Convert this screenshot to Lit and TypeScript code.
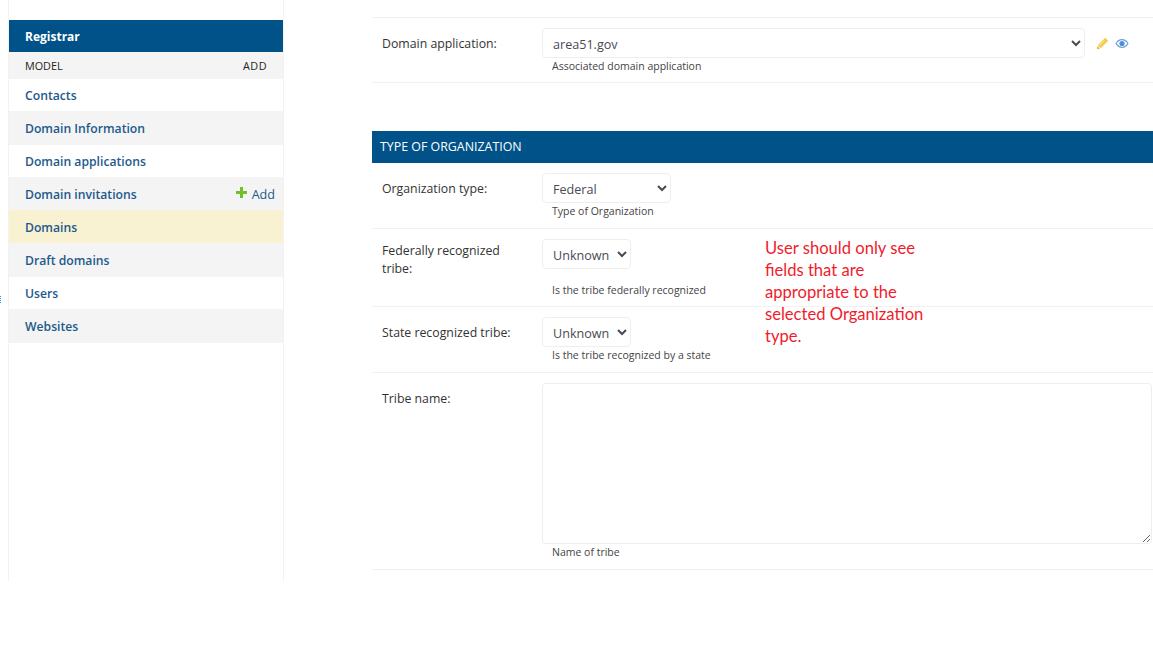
import { LitElement, html, css } from "lit";
import { customElement } from "lit/decorators.js";

const models: { name: string; add?: boolean; cls: string }[] = [
  { name: "Contacts", cls: "r1 white" },
  { name: "Domain Information", cls: "r2 grey" },
  { name: "Domain applications", cls: "r1 white" },
  { name: "Domain invitations", add: true, cls: "r3 grey" },
  { name: "Domains", cls: "r3 yellow" },
  { name: "Draft domains", cls: "r2 grey" },
  { name: "Users", cls: "r1 white" },
  { name: "Websites", cls: "r2 grey" },
];

@customElement("app-root")
export class AppRoot extends LitElement {
  static styles = css`
    :host {
      display: block;
      height: 648px;
      background: #fff;
      font-family: "Open Sans", "Noto Sans", sans-serif;
      color: #333;
      font-size: 13px;
    }
    .page {
      position: relative;
      display: flex;
      height: 581px;
      overflow: hidden;
    }
    .toggle {
      position: absolute;
      left: 0;
      top: 296px;
      width: 1px;
      height: 7px;
      border-left: 1px dotted #3a9bd9;
    }
    .sidebar {
      box-sizing: border-box;
      width: 276px;
      margin-left: 8px;
      padding-top: 20px;
      border-left: 1px solid #f2f2f2;
      border-right: 1px solid #f2f2f2;
      flex: none;
    }
    .app-head {
      height: 32px;
      display: flex;
      align-items: center;
      padding-left: 16px;
      background: #005288;
      color: #fff;
      font-weight: 700;
      font-size: 12px;
    }
    .cols {
      height: 27px;
      display: flex;
      align-items: center;
      justify-content: space-between;
      padding: 0 16px;
      background: #f4f4f4;
      font-size: 10.8px;
      color: #222;
      font-weight: 500;
    }
    .cols .spaced { letter-spacing: 0.5px; }
    .row {
      box-sizing: border-box;
      display: flex;
      align-items: center;
      justify-content: space-between;
      padding: 0 8px 0 16px;
      color: #1d5a8c;
      font-weight: 600;
      font-size: 12.2px;
    }
    .r1 { height: 32px; }
    .r2 { height: 34px; }
    .r3 { height: 33px; padding-top: 1px; }
    .white { background: #fff; }
    .grey { background: #f4f4f4; }
    .yellow { background: #f9f2d2; }
    .add {
      display: flex;
      align-items: center;
      gap: 5px;
      font-weight: 400;
      font-size: 12.6px;
    }
    .add svg { width: 11px; height: 11px; margin-top: -3px; }
    .main {
      flex: 1;
      margin-left: 88px;
      padding-top: 17px;
      min-width: 0;
    }
    .form-row {
      box-sizing: border-box;
      display: flex;
      padding: 10px 1px 0 10px;
      border-bottom: 1px solid #f1f1f1;
    }
    .first { border-top: 1px solid #f1f1f1; height: 66px; }
    .org { height: 66px; }
    .fed { height: 78px; }
    .state { height: 66px; }
    .tribe { height: 197px; }
    label {
      width: 160px;
      flex: none;
      box-sizing: border-box;
      padding: 7px 30px 0 0;
      line-height: 18px;
      font-size: 12.3px;
      color: #333;
    }
    .fed label { padding-top: 3px; }
    .field { flex: 1; min-width: 0; }
    .control { display: flex; align-items: center; }
    select {
      height: 30px;
      box-sizing: border-box;
      border: 1px solid #eee;
      border-radius: 4px;
      background: #fff;
      color: #4a4a55;
      font-family: inherit;
      font-size: 12.6px;
      padding: 2px 6px 0;
    }
    .wide { width: 543px; }
    .org select { width: 129px; }
    .small { width: 89px; padding-right: 0; }
    .icons { display: flex; align-items: center; gap: 6px; margin-left: 11px; }
    .help {
      margin-top: 1px;
      padding-left: 10px;
      font-size: 10.5px;
      line-height: 15px;
      color: #444;
    }
    .fed .help { margin-top: 14px; }
    textarea {
      display: block;
      box-sizing: border-box;
      width: 610px;
      height: 161px;
      border: 1px solid #eee;
      border-radius: 4px;
      background: #fff;
    }
    .section {
      height: 32px;
      margin-top: 48px;
      display: flex;
      align-items: center;
      padding: 0 0 2px 8px;
      box-sizing: border-box;
      background: #005288;
      color: #fff;
      font-size: 12.4px;
      font-weight: 500;
    }
    .next {
      box-sizing: border-box;
      margin: 10px 0 0 170px;
      height: 30px;
      width: 610px;
      border: 1px solid #eee;
      border-top-color: #fdfdfd;
      border-radius: 4px;
    }
    .note {
      position: absolute;
      left: 765px;
      top: 237px;
      width: 175px;
      font-family: Lato, "Open Sans", sans-serif;
      font-size: 16.6px;
      line-height: 22px;
      color: #f01c2c;
    }
  `;

  render() {
    return html`
      <div class="page">
        <span class="toggle"></span>
        <aside class="sidebar">
          <div class="app-head">Registrar</div>
          <div class="cols"><span>MODEL</span><span class="spaced">ADD</span></div>
          ${models.map(
            (m) => html`<div class="row ${m.cls}">
              <span>${m.name}</span>
              ${m.add
                ? html`<span class="add">
                    <svg viewBox="0 0 11 11"><path fill="#70bf2b" d="M4 0h3v4h4v3H7v4H4V7H0V4h4z" /></svg>Add
                  </span>`
                : ""}
            </div>`,
          )}
        </aside>
        <main class="main">
          <div class="form-row first">
            <label>Domain application:</label>
            <div class="field">
              <div class="control">
                <select class="wide"><option>area51.gov</option></select>
                <span class="icons">
                  <svg width="13" height="13" viewBox="0 0 13 13">
                    <path fill="#f7cb4a" d="M9.300 .8 12.200 3.700 4.700 11.200 1.800 8.300z" />
                    <path fill="#f0b429" d="M1.500 8.900 4.100 11.500 .8 12.200z" />
                    <path fill="#fff" opacity=".5" d="M8 3.400 8.600 4 3.800 8.800 3.200 8.200z" />
                  </svg>
                  <svg width="14" height="11" viewBox="0 0 14 11">
                    <path fill="#6fa3d8" d="M7 1C4 1 1.600 3 .4 5.500 1.600 8 4 10 7 10s5.400-2 6.600-4.500C12.400 3 10 1 7 1z" />
                    <path fill="#fff" d="M7 2.200c-2.200 0-4 1.400-5.300 3.300C3 7.400 4.800 8.800 7 8.800s4-1.400 5.300-3.300C11 3.600 9.200 2.200 7 2.200z" />
                    <circle cx="7" cy="5.500" r="2.600" fill="#4d8fd1" />
                  </svg>
                </span>
              </div>
              <div class="help">Associated domain application</div>
            </div>
          </div>
          <div class="section">TYPE OF ORGANIZATION</div>
          <div class="form-row org">
            <label>Organization type:</label>
            <div class="field">
              <select><option>Federal</option></select>
              <div class="help">Type of Organization</div>
            </div>
          </div>
          <div class="form-row fed">
            <label>Federally recognized tribe:</label>
            <div class="field">
              <select class="small"><option>Unknown</option></select>
              <div class="help">Is the tribe federally recognized</div>
            </div>
          </div>
          <div class="form-row state">
            <label>State recognized tribe:</label>
            <div class="field">
              <select class="small"><option>Unknown</option></select>
              <div class="help">Is the tribe recognized by a state</div>
            </div>
          </div>
          <div class="form-row tribe">
            <label>Tribe name:</label>
            <div class="field">
              <textarea></textarea>
              <div class="help">Name of tribe</div>
            </div>
          </div>
          <div class="next"></div>
        </main>
        <div class="note">User should only see fields that are appropriate to the selected Organization type.</div>
      </div>
    `;
  }
}
